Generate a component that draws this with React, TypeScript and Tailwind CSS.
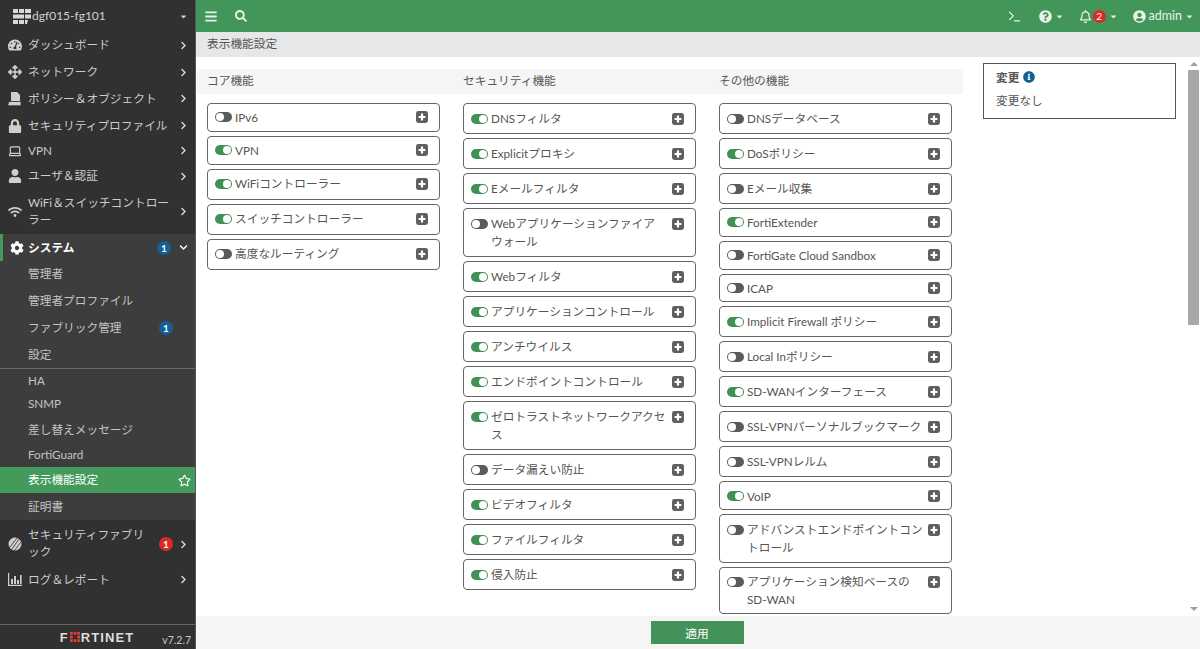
import { Terminal, Laptop } from "lucide-react";
import {
  FaBars,
  FaSearch,
  FaQuestionCircle,
  FaRegBell,
  FaUserCircle,
  FaCaretDown,
  FaChevronRight,
  FaChevronDown,
  FaTachometerAlt,
  FaArrowsAlt,
  FaLock,
  FaUser,
  FaWifi,
  FaCog,
  FaRegStar,
  FaInfoCircle,
} from "react-icons/fa";

const fontStack = "font-['Lato','Noto_Sans_CJK_JP',sans-serif]";

const isLatin = (s: string) => /^[\x20-\x7e]+$/.test(s);

function DeviceLogo() {
  return (
    <svg viewBox="0 0 18 15" className="h-[15px] w-[18px]" fill="#d8d8d8">
      <rect x="0" y="0" width="5" height="4" />
      <rect x="6" y="0" width="5" height="4" />
      <rect x="12" y="0" width="6" height="4" />
      <rect x="0" y="5.5" width="11" height="4" />
      <rect x="12" y="5.5" width="6" height="4" />
      <rect x="0" y="11" width="5" height="4" />
      <rect x="6" y="11" width="5" height="4" />
      <path d="M12 11h3l-1 4h-2z" />
    </svg>
  );
}

function PolicyIcon() {
  return (
    <svg viewBox="0 0 14 14" className="h-[14px] w-[14px]" fill="#cfcfcf">
      <path d="M3 0h6l3 3v6H3z" />
      <path d="M1 9.5h12v3a1.2 1.2 0 0 1-1.2 1.2H0.8A1 1 0 0 1 0 12.5z" stroke="#313131" strokeWidth="0.7" />
    </svg>
  );
}

function FabricIcon() {
  return (
    <svg viewBox="0 0 14 14" className="h-[14px] w-[14px]">
      <circle cx="7" cy="7" r="6.5" fill="#cfcfcf" />
      <path d="M2 10 9 1M4 12l7-10M6.5 13.5 13 5" stroke="#313131" strokeWidth="0.8" />
    </svg>
  );
}

function ReportIcon() {
  return (
    <svg viewBox="0 0 14 13" className="h-[13px] w-[14px]" fill="#cfcfcf">
      <path d="M0 0h1.2v11.8H14V13H0z" />
      <rect x="3" y="6" width="2" height="5" />
      <rect x="6" y="3" width="2" height="8" />
      <rect x="9" y="7" width="2" height="4" />
      <rect x="12" y="2" width="1.6" height="9" />
    </svg>
  );
}

function PlusIcon() {
  return (
    <svg viewBox="0 0 12 12" className="h-[12px] w-[12px] shrink-0">
      <rect width="12" height="12" rx="2.4" fill="#5f5f5f" />
      <path d="M6 2.6v6.8M2.6 6h6.8" stroke="#ffffff" strokeWidth="2.2" />
    </svg>
  );
}

function Badge({ n, color }: { n: number; color: string }) {
  return (
    <span className={`flex h-[14px] w-[14px] items-center justify-center rounded-full text-[10px] font-bold leading-none text-white ${color}`}>
      {n}
    </span>
  );
}

function NavItem({ icon, label, pad, badge }: { icon: React.ReactNode; label: string; pad?: string; badge?: React.ReactNode }) {
  const rowPad = pad ?? (isLatin(label) ? "py-[2.8px] leading-[18px]" : "py-[4.4px] leading-[18px]");
  return (
    <div className={`flex items-center text-[#cccccc] ${rowPad}`}>
      <span className="flex w-[28px] shrink-0 justify-center pl-[2px] text-[14px] text-[#cfcfcf]">{icon}</span>
      <span className="min-w-0 flex-1 whitespace-pre -translate-y-[1px]">{label}</span>
      {badge && <span className="mr-[6px] shrink-0">{badge}</span>}
      <FaChevronRight className="mr-[7px] h-[9px] w-[9px] shrink-0 text-[#d8d8d8]" />
    </div>
  );
}

function SubItem({ label, badge }: { label: string; badge?: React.ReactNode }) {
  const pad = isLatin(label) ? "py-[2.8px]" : "py-[4.4px]";
  return (
    <div className={`flex items-center pl-[28px] leading-[18px] text-[#c4c4c4] ${pad}`}>
      <span className="flex-1 -translate-y-[1px]">{label}</span>
      {badge && <span className="mr-[22px]">{badge}</span>}
    </div>
  );
}

function Sidebar() {
  return (
    <aside className="flex h-[649px] w-[196px] shrink-0 flex-col border-r border-[#555555] bg-[#313131]">
      <div className="flex h-[32px] shrink-0 items-center pl-[13px] pr-[7px] text-[#d0d0d0]">
        <DeviceLogo />
        <span className="flex-1 pl-[1px] text-[12px]">dgf015-fg101</span>
        <FaCaretDown className="h-[9px] w-[9px] text-[#cccccc]" />
      </div>

      <NavItem icon={<FaTachometerAlt />} label="ダッシュボード" />
      <NavItem icon={<FaArrowsAlt />} label="ネットワーク" />
      <NavItem icon={<PolicyIcon />} label="ポリシー＆オブジェクト" />
      <NavItem icon={<FaLock />} label="セキュリティプロファイル" />
      <NavItem icon={<Laptop size={14} strokeWidth={2} />} label="VPN" />
      <NavItem icon={<FaUser />} label="ユーザ＆認証" />
      <NavItem icon={<FaWifi />} label={"WiFi＆スイッチコントロー\nラー"} pad="pt-[5px] pb-[5.7px] leading-[17px]" />

      {/* System section */}
      <div className="bg-[#3d3d3d]">
        <div className="flex items-center border-l-[3px] border-[#439a5a] py-[4.4px] font-bold leading-[18px] text-white">
          <span className="flex w-[25px] shrink-0 justify-center pl-[2px] text-[14px]">
            <FaCog />
          </span>
          <span className="flex-1 -translate-y-[1px]">システム</span>
          <span className="mr-[8px]">
            <Badge n={1} color="bg-[#155f98]" />
          </span>
          <FaChevronDown className="mr-[7px] h-[9px] w-[9px]" />
        </div>
        <div className="border-b border-[#6a6a6a]">
          <SubItem label="管理者" />
          <SubItem label="管理者プロファイル" />
          <SubItem label="ファブリック管理" badge={<Badge n={1} color="bg-[#155f98]" />} />
          <SubItem label="設定" />
        </div>
        <SubItem label="HA" />
        <SubItem label="SNMP" />
        <SubItem label="差し替えメッセージ" />
        <SubItem label="FortiGuard" />
        <div className="flex items-center bg-[#439a5a] py-[4.4px] pl-[28px] leading-[18px] text-white">
          <span className="flex-1 -translate-y-[1px]">表示機能設定</span>
          <FaRegStar className="mr-[4px] h-[13px] w-[13px]" />
        </div>
        <SubItem label="証明書" />
      </div>

      <NavItem icon={<FabricIcon />} label={"セキュリティファブリ\nック"} pad="pt-[7px] pb-[5px] leading-[17px]" badge={<Badge n={1} color="bg-[#d92b25]" />} />
      <NavItem icon={<ReportIcon />} label="ログ＆レポート" />

      <div className="mt-auto flex h-[25px] shrink-0 items-center justify-end border-t border-[#666666] pr-[4px] text-[#c8c8c8]">
        <span className="mr-[28px] flex items-center font-['Liberation_Sans',sans-serif] text-[13px] font-bold leading-none tracking-[1.1px] text-[#dddddd]">
          F
          <svg viewBox="0 0 11 11" className="mx-[1px] h-[10px] w-[10px]" fill="#e0403a">
            <rect x="0" y="0" width="3" height="3" />
            <rect x="4" y="0" width="3" height="3" />
            <rect x="8" y="0" width="3" height="3" />
            <rect x="0" y="4" width="3" height="3" />
            <rect x="8" y="4" width="3" height="3" />
            <rect x="0" y="8" width="3" height="3" />
            <rect x="4" y="8" width="3" height="3" />
            <rect x="8" y="8" width="3" height="3" />
          </svg>
          RTINET
        </span>
        <span className="pt-[5px] text-[10.5px]">v7.2.7</span>
      </div>
    </aside>
  );
}

function TopBar() {
  return (
    <header className="flex h-[32px] shrink-0 items-center bg-[#43965a] text-white">
      <FaBars className="ml-[9px] h-[13px] w-[12px] text-[#e8f2ea]" />
      <FaSearch className="ml-[18px] h-[12px] w-[12px] text-[#e8f2ea]" />
      <div className="ml-auto flex items-center text-[#e8f2ea]">
        <Terminal size={15} strokeWidth={2} />
        <FaQuestionCircle className="ml-[17px] h-[13px] w-[13px]" />
        <FaCaretDown className="ml-[3px] h-[9px] w-[9px]" />
        <FaRegBell className="ml-[15px] h-[13px] w-[13px]" />
        <span className="ml-[1px] flex h-[13px] w-[13px] items-center justify-center rounded-full bg-[#d92b25] text-[10px] leading-none text-white">2</span>
        <FaCaretDown className="ml-[3px] h-[9px] w-[9px]" />
        <FaUserCircle className="ml-[15px] h-[13px] w-[13px]" />
        <span className="ml-[3px] text-[12.5px]">admin</span>
        <FaCaretDown className="ml-[3px] mr-[6px] h-[9px] w-[9px]" />
      </div>
    </header>
  );
}

type Feature = [string, boolean];

function Toggle({ on }: { on: boolean }) {
  return (
    <span className={`flex h-[10px] w-[17px] shrink-0 items-center rounded-full p-[1px] ${on ? "justify-end bg-[#3f9155]" : "justify-start bg-[#5a5a5a]"}`}>
      <span className="h-[8px] w-[8px] rounded-full bg-white" />
    </span>
  );
}

function FeatureCard({ name, on }: { name: string; on: boolean }) {
  const latin = isLatin(name);
  const compact = latin || name.endsWith("SD-WAN");
  return (
    <div className={`flex items-start rounded-[4px] border border-[#666666] bg-white pl-[7px] pr-[11px] leading-[18px] ${compact ? "py-[4.4px]" : "py-[5.5px]"}`}>
      <span className="flex h-[18px] items-center">
        <Toggle on={on} />
      </span>
      <span className={`min-w-0 flex-1 whitespace-pre pl-[3px] text-[#555555] ${latin ? "" : "-translate-y-[1px]"}`}>{name}</span>
      <span className="flex h-[18px] items-center">
        <PlusIcon />
      </span>
    </div>
  );
}

function FeatureColumn({ items }: { items: Feature[] }) {
  return (
    <div className="flex w-[233px] shrink-0 flex-col gap-[4px]">
      {items.map(([name, on]) => (
        <FeatureCard key={name} name={name} on={on} />
      ))}
    </div>
  );
}

const core: Feature[] = [
  ["IPv6", false],
  ["VPN", true],
  ["WiFiコントローラー", true],
  ["スイッチコントローラー", true],
  ["高度なルーティング", false],
];

const security: Feature[] = [
  ["DNSフィルタ", true],
  ["Explicitプロキシ", true],
  ["Eメールフィルタ", true],
  ["Webアプリケーションファイア\nウォール", false],
  ["Webフィルタ", true],
  ["アプリケーションコントロール", true],
  ["アンチウイルス", true],
  ["エンドポイントコントロール", true],
  ["ゼロトラストネットワークアクセ\nス", true],
  ["データ漏えい防止", false],
  ["ビデオフィルタ", true],
  ["ファイルフィルタ", true],
  ["侵入防止", true],
];

const other: Feature[] = [
  ["DNSデータベース", false],
  ["DoSポリシー", true],
  ["Eメール収集", false],
  ["FortiExtender", true],
  ["FortiGate Cloud Sandbox", false],
  ["ICAP", false],
  ["Implicit Firewall ポリシー", true],
  ["Local Inポリシー", false],
  ["SD-WANインターフェース", true],
  ["SSL-VPNパーソナルブックマーク", false],
  ["SSL-VPNレルム", false],
  ["VoIP", true],
  ["アドバンストエンドポイントコン\nトロール", false],
  ["アプリケーション検知ベースの\nSD-WAN", false],
];

function Scrollbar() {
  return (
    <div className="flex w-[13px] shrink-0 flex-col items-center py-[5px]">
      <span className="h-0 w-0 border-x-[4px] border-b-[4px] border-x-transparent border-b-[#a0a0a0]" />
      <div className="mt-[4px] h-[255px] w-[11px] bg-[#a8a8a8]" />
      <span className="mt-auto h-0 w-0 border-x-[4px] border-t-[4px] border-x-transparent border-t-[#a0a0a0]" />
    </div>
  );
}

export default function App() {
  return (
    <div className={`flex h-[649px] w-[1200px] overflow-hidden bg-white text-[11.7px] leading-[18px] ${fontStack}`}>
      <Sidebar />
      <div className="flex min-w-0 flex-1 flex-col">
        <TopBar />
        <div className="flex h-[25px] shrink-0 items-center bg-[#e6e7e8] pb-[3px] pl-[11px] text-[#555555]">表示機能設定</div>
        <div className="flex min-h-0 flex-1">
          <div className="min-w-0 flex-1 overflow-hidden">
            <div className="flex">
              <div className="ml-[1px] w-[766px] shrink-0">
                <div className="mt-[12px] grid h-[25px] grid-cols-[256px_256px_1fr] items-center bg-[#f5f5f5] pb-[4px] pl-[10px] text-[#555555]">
                  <span>コア機能</span>
                  <span>セキュリティ機能</span>
                  <span>その他の機能</span>
                </div>
                <div className="mt-[9px] flex gap-[23px] pl-[10px]">
                  <FeatureColumn items={core} />
                  <FeatureColumn items={security} />
                  <FeatureColumn items={other} />
                </div>
              </div>
              <div className="ml-[20px] mt-[6px] h-[56px] w-[193px] shrink-0 border border-[#555555] px-[12px] pt-[4px] text-[#555555]">
                <div className="flex items-center font-bold">
                  変更
                  <FaInfoCircle className="ml-[4px] h-[12px] w-[12px] text-[#155f98]" />
                </div>
                <div className="mt-[5px]">変更なし</div>
              </div>
            </div>
          </div>
          <Scrollbar />
        </div>
        <div className="flex h-[33px] shrink-0 items-center justify-center bg-[#f5f5f5]">
          <button className="mr-[2px] h-[23px] w-[93px] bg-[#439259] text-[11.7px] text-white">適用</button>
        </div>
      </div>
    </div>
  );
}
